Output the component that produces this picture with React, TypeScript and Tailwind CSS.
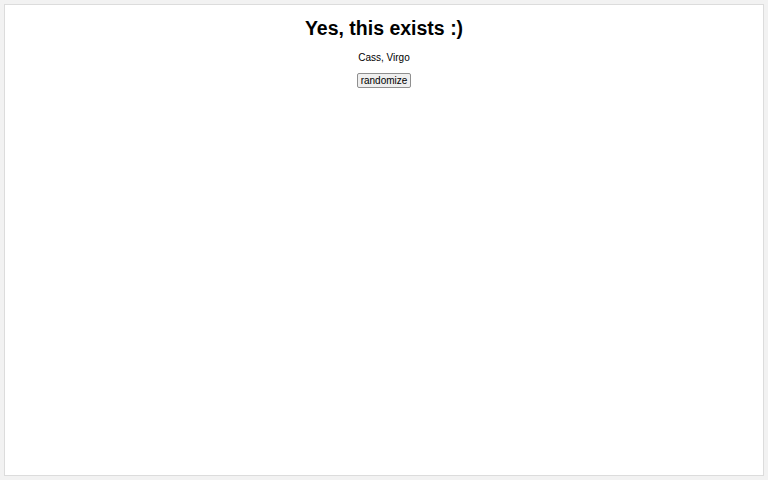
export default function App() {
  return (
    <div className="h-[480px] bg-[#f2f2f2] p-1 font-['Liberation_Sans',Arial,sans-serif]">
      <div className="h-full border border-[#dcdcdc] bg-white flex flex-col items-center pt-[11px]">
        <h1 className="text-[19.5px] font-bold text-black leading-[24px]">Yes, this exists :)</h1>
        <p className="mt-[12px] text-[10px] leading-[12px] text-black">Cass, Virgo</p>
        <button className="mt-[9px] h-[15px] px-[3px] text-[10px] leading-[12px] text-black bg-[#efefef] border border-[#8f8f8f] rounded-[2px]">
          randomize
        </button>
      </div>
    </div>
  )
}
